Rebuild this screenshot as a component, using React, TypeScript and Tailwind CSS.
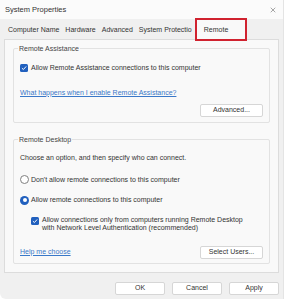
import { X } from "lucide-react"

const font = { fontFamily: "'Liberation Sans', Arial, sans-serif" }

function Checkbox() {
  return (
    <span className="w-[8px] h-[8px] rounded-[1.5px] bg-[#2160be] flex items-center justify-center shrink-0">
      <svg width="6" height="6" viewBox="0 0 10 10">
        <path d="M1.5 5.2 L4 7.6 L8.6 2.4" fill="none" stroke="white" strokeWidth="1.6" />
      </svg>
    </span>
  )
}

function Radio({ checked }: { checked?: boolean }) {
  return checked ? (
    <span className="w-[9px] h-[9px] rounded-full bg-[#2160be] flex items-center justify-center shrink-0">
      <span className="w-[4px] h-[4px] rounded-full bg-white" />
    </span>
  ) : (
    <span className="w-[9px] h-[9px] rounded-full border border-[#808080] bg-white shrink-0" />
  )
}

function Button({ label, w = "w-[63px]" }: { label: string; w?: string }) {
  return (
    <div className={`${w} h-[13px] bg-white border border-[#d6d6d6] rounded-[2px] flex items-center justify-center text-[7px] text-[#333]`}>
      {label}
    </div>
  )
}

function Group({ title, h, children }: { title: string; h: string; children: React.ReactNode }) {
  return (
    <div className={`relative border border-[#e2e2e2] rounded-[2px] ${h}`}>
      <span className="absolute -top-[5px] left-[4px] px-[1px] bg-[#f9f9f9] text-[7px] leading-[9px] text-[#444]">
        {title}
      </span>
      {children}
    </div>
  )
}

export default function App() {
  const tabs = ["Computer Name", "Hardware", "Advanced", "System Protectio"]

  return (
    <div className="w-[286px] h-[300px] bg-white overflow-hidden" style={font}>
      <div className="w-[284px] h-[299px] bg-[#f0f0f0] rounded-bl-[6px] border-r border-[#e4e4e4] flex flex-col">
        {/* Title bar */}
        <div className="h-[19px] bg-[#fbfbfb] flex items-center justify-between pl-[5px] pr-[6px]">
          <span className="text-[7.5px] text-[#333]">System Properties</span>
          <X size={8} strokeWidth={1.4} className="text-[#444]" />
        </div>

        {/* Tabs */}
        <div className="h-[20px] flex items-end pl-[8px]">
          <div className="flex items-center gap-[6px] h-[17px] text-[7px] text-[#333]">
            {tabs.map((t) => (
              <span key={t} className="whitespace-nowrap">{t}</span>
            ))}
          </div>
          <div className="relative z-10 -mb-[2px] ml-[3px] h-[23px] w-[52px] border-2 border-[#d0222f] bg-[#f9f9f9] flex items-start pt-[5px] pl-[7px] text-[7px] text-[#333]">
            Remote
          </div>
        </div>

        {/* Panel */}
        <div className="ml-[4px] mr-[4px] h-[234px] bg-[#f9f9f9] border border-[#dcdcdc] px-[8px] pt-[8px] text-[7px] text-[#333]">
          <Group title="Remote Assistance" h="h-[75px]">
            <div className="flex items-center gap-[3px] pl-[6px] pt-[14px]">
              <Checkbox />
              <span>Allow Remote Assistance connections to this computer</span>
            </div>
            <div className="pl-[6px] mt-[14px] text-[#3a78c8] underline">
              What happens when I enable Remote Assistance?
            </div>
            <div className="flex justify-end pr-[6px] mt-[6px]">
              <Button label="Advanced..." />
            </div>
          </Group>

          <div className="h-[16px]" />

          <Group title="Remote Desktop" h="h-[125px]">
            <div className="pl-[6px] pt-[13px]">Choose an option, and then specify who can connect.</div>
            <div className="flex items-center gap-[2px] pl-[6px] mt-[11px]">
              <Radio />
              <span>Don't allow remote connections to this computer</span>
            </div>
            <div className="flex items-center gap-[2px] pl-[6px] mt-[10px]">
              <Radio checked />
              <span>Allow remote connections to this computer</span>
            </div>
            <div className="flex items-start gap-[3px] pl-[17px] mt-[10px]">
              <span className="mt-[1px]">
                <Checkbox />
              </span>
              <span className="leading-[8.5px]">
                Allow connections only from computers running Remote Desktop
                <br />
                with Network Level Authentication (recommended)
              </span>
            </div>
            <div className="flex items-center justify-between pl-[6px] pr-[6px] mt-[13px]">
              <span className="text-[#3a78c8] underline">Help me choose</span>
              <Button label="Select Users..." />
            </div>
          </Group>
        </div>

        {/* Footer buttons */}
        <div className="flex justify-end gap-[7px] pr-[4px] mt-[9px]">
          <Button label="OK" w="w-[50px]" />
          <Button label="Cancel" w="w-[50px]" />
          <Button label="Apply" w="w-[50px]" />
        </div>
      </div>
    </div>
  )
}
